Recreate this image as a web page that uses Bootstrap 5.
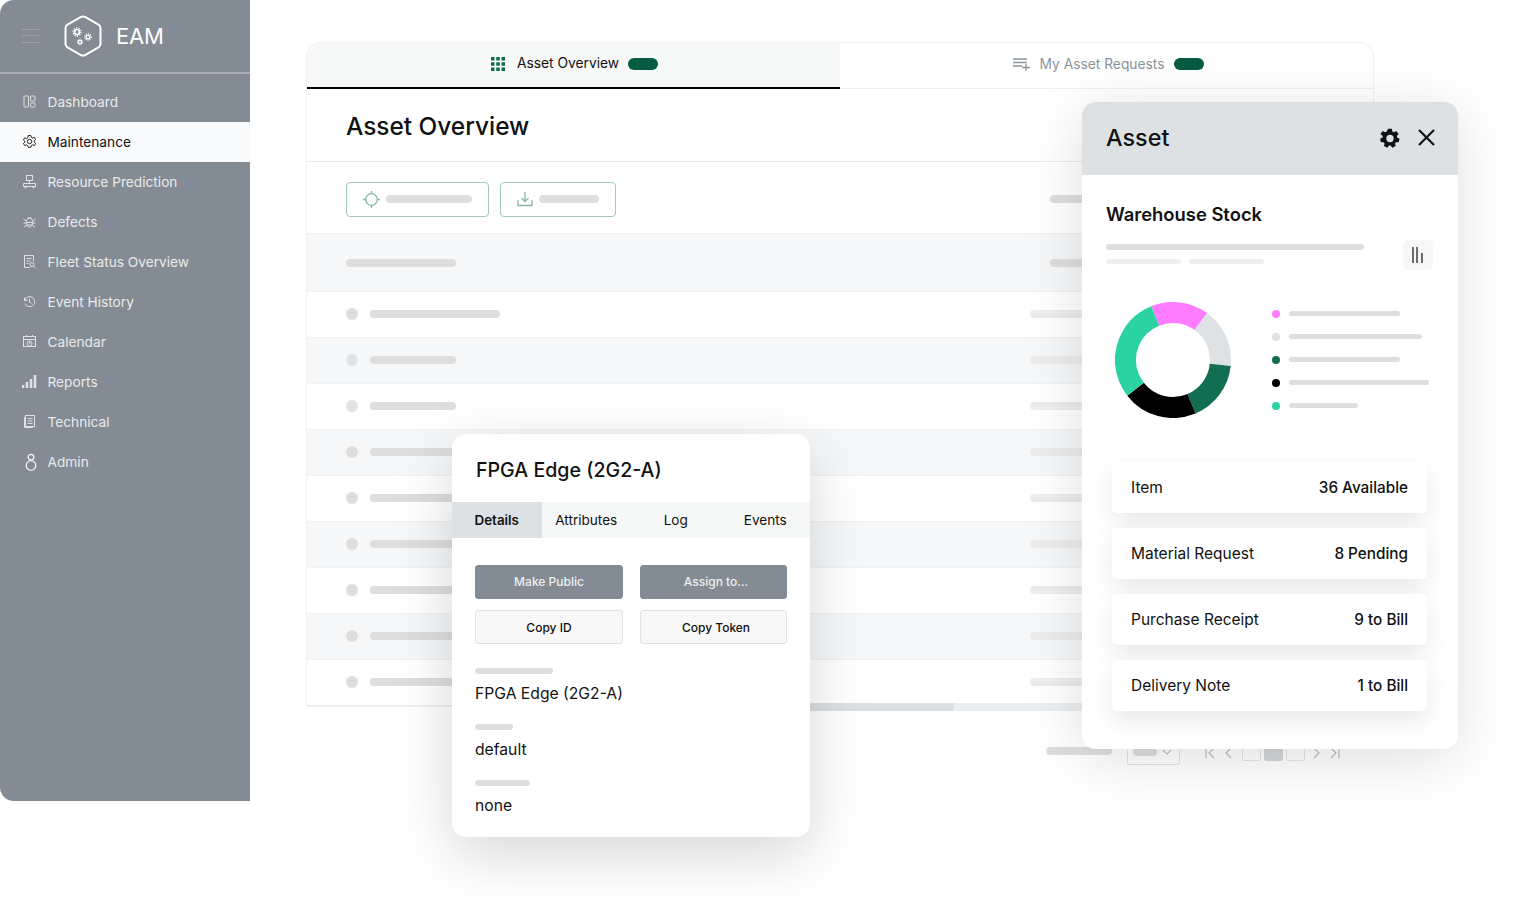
<!DOCTYPE html>
<html lang="en">
<head>
  <meta charset="UTF-8" />
  <meta name="viewport" content="width=device-width, initial-scale=1.0" />
  <title>EAM - Asset Overview</title>
  <link href="https://cdn.jsdelivr.net/npm/bootstrap@5.3.2/dist/css/bootstrap.min.css" rel="stylesheet" />
  <style>
    html, body {
      height: 100%;
    }

    body {
      background: #fff;
      color: #111;
      font-family: "Inter", "Liberation Sans", sans-serif;
      overflow: hidden;
    }

    .eam-canvas {
      position: relative;
      width: 1518px;
      height: 918px;
    }

    /* the four windows sit on a free canvas */
    .eam-side {
      position: absolute;
      left: 0;
      top: 0;
      width: 250px;
      height: 801px;
      background: #838c94;
      border-radius: 14px 0 0 14px;
    }

    .eam-brand {
      height: 74px;
      border-bottom: 2px solid #a9b0b5;
      padding-left: 22px;
    }

    .eam-burger {
      width: 17px;
      height: 14px;
      border-top: 1px solid #9aa2a8;
      border-bottom: 1px solid #9aa2a8;
      position: relative;
      margin-right: 25px;
    }

    .eam-burger::after {
      content: "";
      position: absolute;
      left: 0;
      right: 0;
      top: 5px;
      border-top: 1px solid #9aa2a8;
    }

    .eam-brand-name {
      font-size: 22px;
      color: #fff;
      margin-left: 14px;
      letter-spacing: -.2px;
    }

    .eam-nav {
      padding-top: 8px;
    }

    .eam-nav .nav-link {
      height: 40px;
      padding: 0 0 0 22px;
      display: flex;
      align-items: center;
      gap: 10.5px;
      font-size: 13.7px;
      color: #e9ebed;
    }

    .eam-nav .nav-link svg {
      width: 15px;
      height: 15px;
      flex: none;
      margin-top: -2px;
      fill: none;
      stroke: #dfe2e4;
      stroke-width: 1;
    }

    .eam-nav .nav-link svg.eam-ico-admin {
      height: 19px;
      margin-top: 0;
      stroke: #f1f2f3;
      stroke-width: 1.3;
    }

    .eam-nav .nav-link.active {
      background: #f9fafb;
      color: #111;
    }

    .eam-nav .nav-link.active svg {
      stroke: #222;
    }

    .eam-main {
      position: absolute;
      left: 306px;
      top: 42px;
      width: 1068px;
    }

    .eam-sheet {
      border: 1px solid #eef0f1;
      border-radius: 14px 14px 0 0;
      background: #fff;
      position: relative;
    }

    .eam-tab {
      height: 46px;
      flex: 1 1 50%;
      gap: 8px;
      padding: 0 0 3px 4px;
      font-size: 13.8px;
      color: #8b949b;
      border-bottom: 1px solid #eef0f1;
    }

    .eam-tab.is-on {
      background: #f7f8f8;
      color: #111;
      padding-left: 2px;
      border-bottom: 2px solid #000;
      border-top-left-radius: 14px;
    }

    .eam-pill {
      width: 30px;
      height: 12px;
      border-radius: 6px;
      background: #055c42;
      margin-left: 1px;
    }

    .eam-title {
      height: 73px;
      padding: 4px 0 0 39px;
      font-size: 24.4px;
      font-weight: 500;
      margin: 0;
      border-bottom: 1px solid #e9ebec;
    }

    .eam-tools {
      height: 72px;
      padding: 3px 0 0 39px;
      border-bottom: 1px solid #eef0f1;
      gap: 11px;
    }

    .eam-tool {
      height: 35px;
      border: 1px solid #a3c8bd;
      border-radius: 4px;
      padding: 0 16px;
      gap: 6px;
    }

    .eam-bar {
      display: block;
      height: 8px;
      border-radius: 4px;
      background: #dedede;
    }

    .eam-head {
      height: 58px;
      background: #f6f7f8;
      padding-left: 39px;
      border-bottom: 1px solid #eef0f1;
    }

    .eam-row {
      height: 46px;
      padding: 0 0 1px 39px;
      gap: 12px;
      border-bottom: 1px solid #f1f2f3;
    }

    .eam-row:nth-child(even) {
      background: #f6f7f8;
    }

    .eam-row:last-child {
      border-bottom-color: #e9ebec;
    }

    .eam-dot {
      width: 12px;
      height: 12px;
      border-radius: 50%;
      background: #dedede;
    }

    .eam-dot.is-blue {
      background: #dfe3e6;
    }

    /* right column of the table, mostly hidden behind the Asset window */
    .eam-tail {
      margin-left: auto;
      margin-right: 283px;
      width: 40px;
    }

    .eam-row .eam-tail {
      width: 60px;
      background: #ececec;
    }

    .eam-scroll {
      position: absolute;
      left: 145px;
      right: 0;
      bottom: -5px;
      height: 8px;
      background: #ebeef0;
    }

    .eam-scroll span {
      display: block;
      width: 502px;
      height: 8px;
      background: #dcdfe2;
    }

    .eam-pager {
      height: 76px;
      padding: 12px 33px 0 0;
      gap: 7px;
    }

    .eam-select {
      width: 53px;
      height: 26px;
      border: 1px solid #e2e4e6;
      border-radius: 2px;
      margin: 2px 17px 0 8px;
      padding-left: 5px;
      gap: 4px;
    }

    .eam-page {
      width: 19px;
      height: 20px;
      border: 1px solid #e2e4e6;
      border-radius: 2px;
    }

    .eam-page + .eam-page {
      margin-left: -4px;
    }

    .eam-page.is-last {
      margin-right: -2px;
    }

    .eam-page.is-on {
      background: #d2d6da;
      border-color: #d2d6da;
    }

    .eam-pager svg {
      fill: none;
      stroke: #b9bec2;
      stroke-width: 1.2;
      width: 12px;
      height: 12px;
      margin-top: 3px;
    }

    .eam-select svg {
      margin-top: 0;
    }

    .eam-popup {
      position: absolute;
      left: 452px;
      top: 434px;
      width: 358px;
      height: 403px;
      background: #fff;
      border-radius: 14px;
      box-shadow: 0 18px 60px rgba(0, 0, 0, .16);
    }

    .eam-popup h2 {
      font-size: 19.6px;
      font-weight: 500;
      margin: 0;
      padding: 25px 24px 0;
      height: 68px;
    }

    .eam-ptabs {
      height: 36px;
      background: #f6f7f7;
    }

    .eam-ptabs .nav-link {
      flex: 1 1 25%;
      padding: 0;
      height: 36px;
      display: flex;
      align-items: center;
      justify-content: center;
      font-size: 13.6px;
      color: #111;
    }

    .eam-ptabs .nav-link.active {
      background: #dee1e4;
      font-size: 13.4px;
      font-weight: 600;
    }

    .eam-actions {
      display: grid;
      grid-template-columns: 148px 147px;
      column-gap: 17px;
      row-gap: 11px;
      padding: 27px 0 0 23px;
    }

    .eam-actions .btn {
      height: 34px;
      font-size: 12px;
      font-weight: 500;
      padding: 0;
      border-radius: 3px;
    }

    .eam-actions .btn:nth-child(even) {
      padding-left: 5px;
    }

    .eam-actions .eam-btn-line {
      padding-top: 1px;
    }

    .eam-btn-fill {
      background: #838c94;
      border: 1px solid #838c94;
      color: #eef0f1;
    }

    .eam-btn-line {
      background: #f8f8f8;
      border: 1px solid #dfe2e4;
      color: #111;
    }

    .eam-fields {
      padding: 24px 0 0 23px;
      font-size: 15.7px;
    }

    .eam-field {
      height: 56px;
    }

    .eam-field .eam-bar {
      height: 6px;
      margin-bottom: 8px;
    }

    .eam-asset {
      position: absolute;
      left: 1082px;
      top: 102px;
      width: 376px;
      height: 647px;
      background: #fff;
      border-radius: 14px;
      box-shadow: 0 10px 60px rgba(0, 0, 0, .13);
      overflow: hidden;
    }

    .eam-asset-head {
      height: 73px;
      background: #dee1e4;
      padding: 0 20px 1px 24px;
      font-size: 23.4px;
      font-weight: 500;
    }

    .eam-asset-head svg {
      width: 24px;
      height: 24px;
    }

    .eam-asset-head svg.eam-gear {
      width: 22px;
      height: 22px;
      margin-right: 13px;
    }

    .eam-stock {
      padding: 28px 25px 0 24px;
    }

    .eam-stock h3 {
      font-size: 18.4px;
      font-weight: 600;
      margin: 0;
      height: 41px;
    }

    .eam-stock .eam-bar {
      height: 6px;
    }

    .eam-stock-bars {
      gap: 9px;
    }

    .eam-stock .eam-soft {
      background: #efefef;
      height: 5px;
    }

    .eam-ico-box {
      width: 30px;
      height: 30px;
      border-radius: 5px;
      background: #f6f7f8;
      margin-top: -4px;
    }

    .eam-chart {
      padding: 32px 0 0 9px;
    }

    .eam-legend {
      padding: 9px 0 0 41px;
      gap: 18px;
    }

    .eam-legend .eam-item {
      gap: 9px;
      height: 5px;
    }

    .eam-legend .eam-swatch {
      width: 8px;
      height: 8px;
      border-radius: 50%;
    }

    .eam-legend .eam-bar {
      height: 5px;
      border-radius: 3px;
    }

    .eam-list {
      padding: 44px 31px 0 30px;
      gap: 15px;
    }

    .eam-line {
      height: 51px;
      border-radius: 5px;
      background: #fff;
      padding: 0 19px;
      font-size: 15.5px;
      box-shadow: 0 10px 24px rgba(0, 0, 0, .09);
    }

    .eam-line b {
      padding-top: 2px;
      font-size: 15.3px;
      font-weight: 500;
    }
  </style>
</head>
<body>

  <div class="eam-canvas">

    <aside class="eam-side">
      <div class="eam-brand d-flex align-items-center">
        <div class="eam-burger"></div>
        <svg width="38" height="42" viewBox="0 0 38 42" fill="none" stroke="#fff" stroke-width="2">
          <path d="M16.5 2.2 3.5 9.6A4 4 0 0 0 1.5 13v16a4 4 0 0 0 2 3.4l13 7.4a5 5 0 0 0 5 0l13-7.4a4 4 0 0 0 2-3.4V13a4 4 0 0 0-2-3.4l-13-7.4a5 5 0 0 0-5 0Z" />
          <circle cx="13" cy="17" r="2.4" stroke-width="1.5" />
          <circle cx="13" cy="17" r="4" stroke-width="1.3" stroke-dasharray="1.3 1.2" />
          <circle cx="24" cy="22" r="1.9" stroke-width="1.3" />
          <circle cx="24" cy="22" r="3.2" stroke-width="1.1" stroke-dasharray="1.1 1" />
          <circle cx="16" cy="27" r="1.7" stroke-width="1.3" />
          <circle cx="16" cy="27" r="2.8" stroke-width="1" stroke-dasharray="1 .9" />
        </svg>
        <span class="eam-brand-name">EAM</span>
      </div>
      <nav class="nav flex-column eam-nav">
        <a class="nav-link" href="#">
          <svg viewBox="0 0 15 15"><rect x="2" y="2" width="4.5" height="11" rx=".8" /><rect x="8.5" y="2" width="4.5" height="5" rx=".8" /><rect x="8.5" y="9" width="4.5" height="4" rx=".8" /></svg>
          Dashboard
        </a>
        <a class="nav-link active" href="#">
          <svg viewBox="0 0 15 15"><circle cx="7.5" cy="7.5" r="2.2" /><path d="M6.2 1.5h2.6l.4 1.8 1.4.7 1.7-.7 1.3 2.2-1.4 1.2v1.5l1.4 1.2-1.3 2.2-1.7-.7-1.4.7-.4 1.8H6.2l-.4-1.8-1.4-.7-1.7.7-1.3-2.2 1.4-1.2V7.2L1.4 6l1.3-2.2 1.7.7 1.4-.7Z" /></svg>
          Maintenance
        </a>
        <a class="nav-link" href="#">
          <svg viewBox="0 0 15 15"><rect x="4.5" y="1.5" width="6" height="5" /><path d="M7.5 6.5v3M1.5 12.5v-3h12v3ZM1.5 12.5h12" /><circle cx="3.5" cy="13.2" r=".8" /><circle cx="11.5" cy="13.2" r=".8" /></svg>
          Resource Prediction
        </a>
        <a class="nav-link" href="#">
          <svg viewBox="0 0 15 15"><ellipse cx="7.5" cy="8.5" rx="3" ry="4.5" /><path d="M5.5 3 7.5 5l2-2M1.5 5l3 2M13.5 5l-3 2M1.5 9h3M13.5 9h-3M2 13l3-2M13 13l-3-2M5 8.5h5M5 11h5" /></svg>
          Defects
        </a>
        <a class="nav-link" href="#">
          <svg viewBox="0 0 15 15"><path d="M11.5 7V1.5h-9v12h5" /><path d="M4.5 4.5h5M4.5 7h4M4.5 9.5h2" /><circle cx="10" cy="10.5" r="2" /><path d="m11.5 12 2 2" /></svg>
          Fleet Status Overview
        </a>
        <a class="nav-link" href="#">
          <svg viewBox="0 0 15 15"><path d="M2.5 3.5v3h3" /><path d="M2.8 6.5A5 5 0 1 1 3 9.5" /><path d="M7.5 5v3l2 1.2" /></svg>
          Event History
        </a>
        <a class="nav-link" href="#">
          <svg viewBox="0 0 15 15"><rect x="1.5" y="2.5" width="12" height="10" /><path d="M1.5 5.5h12M4.5 1v2M10.5 1v2" /><circle cx="7.5" cy="9.5" r="2.5" /><path d="M7.5 8.2v1.3h1" /></svg>
          Calendar
        </a>
        <a class="nav-link" href="#">
          <svg viewBox="0 0 15 15"><path d="M1 11v3M5 8v6M9 5v9M13 1v13" stroke-width="2.6" /></svg>
          Reports
        </a>
        <a class="nav-link" href="#">
          <svg viewBox="0 0 15 15"><rect x="3.5" y="1.5" width="9" height="11" /><path d="M3.5 3.5h-1v10h8v-1M5.5 4.5h5M5.500 7h5M5.5 9.500h5" /></svg>
          Technical
        </a>
        <a class="nav-link" href="#">
          <svg class="eam-ico-admin" viewBox="-1.5 0 15 19"><circle cx="7.5" cy="4.2" r="2.8" /><circle cx="7.5" cy="12.5" r="4.8" /></svg>
          Admin
        </a>
      </nav>
    </aside>

    <section class="eam-main">
      <div class="eam-sheet">
        <div class="d-flex">
          <div class="eam-tab is-on d-flex align-items-center justify-content-center">
            <svg width="14" height="14" viewBox="0 0 14 14" fill="#0f6a4e">
              <rect width="3.5" height="3.5" /><rect x="5.25" width="3.5" height="3.5" /><rect x="10.5" width="3.5" height="3.5" />
              <rect y="5.25" width="3.5" height="3.5" /><rect x="5.25" y="5.25" width="3.5" height="3.5" /><rect x="10.5" y="5.25" width="3.5" height="3.5" />
              <rect y="10.5" width="3.5" height="3.5" /><rect x="5.25" y="10.5" width="3.5" height="3.5" /><rect x="10.5" y="10.5" width="3.5" height="3.5" />
            </svg>
            <span class="ms-1">Asset Overview</span>
            <span class="eam-pill"></span>
          </div>
          <div class="eam-tab d-flex align-items-center justify-content-center">
            <svg width="18" height="13" viewBox="0 0 18 13" fill="none" stroke="#8b949b" stroke-width="1.3">
              <path d="M0 1h14M0 4.5h14M0 8h9M13 6v7M9 9.5h8" />
            </svg>
            <span>My Asset Requests</span>
            <span class="eam-pill"></span>
          </div>
        </div>

        <h1 class="eam-title d-flex align-items-center">Asset Overview</h1>

        <div class="eam-tools d-flex align-items-center">
          <div class="eam-tool d-flex align-items-center">
            <svg width="17" height="17" viewBox="0 0 17 17" fill="none" stroke="#86b5a7" stroke-width="1.3"><circle cx="8.5" cy="8.5" r="5.8" /><path d="M8.5 0v2M8.5 15v2M0 8.5h2M15 8.5h2" /></svg>
            <span class="eam-bar" style="width:86px"></span>
          </div>
          <div class="eam-tool d-flex align-items-center">
            <svg width="16" height="16" viewBox="0 0 16 16" fill="none" stroke="#86b5a7" stroke-width="1.3"><path d="M1 9v5.5h14V9M8 1v9M4.5 7 8 10.500 11.500 7" /></svg>
            <span class="eam-bar" style="width:60px"></span>
          </div>
          <span class="eam-bar eam-tail"></span>
        </div>

        <div class="eam-head d-flex align-items-center">
          <span class="eam-bar" style="width:110px"></span>
          <span class="eam-bar eam-tail"></span>
        </div>

        <div>
          <div class="eam-row d-flex align-items-center"><span class="eam-dot"></span><span class="eam-bar" style="width:130px"></span><span class="eam-bar eam-tail"></span></div>
          <div class="eam-row d-flex align-items-center"><span class="eam-dot is-blue"></span><span class="eam-bar" style="width:86px"></span><span class="eam-bar eam-tail"></span></div>
          <div class="eam-row d-flex align-items-center"><span class="eam-dot is-blue"></span><span class="eam-bar" style="width:86px"></span><span class="eam-bar eam-tail"></span></div>
          <div class="eam-row d-flex align-items-center"><span class="eam-dot"></span><span class="eam-bar" style="width:86px"></span><span class="eam-bar eam-tail"></span></div>
          <div class="eam-row d-flex align-items-center"><span class="eam-dot"></span><span class="eam-bar" style="width:86px"></span><span class="eam-bar eam-tail"></span></div>
          <div class="eam-row d-flex align-items-center"><span class="eam-dot"></span><span class="eam-bar" style="width:86px"></span><span class="eam-bar eam-tail"></span></div>
          <div class="eam-row d-flex align-items-center"><span class="eam-dot"></span><span class="eam-bar" style="width:86px"></span><span class="eam-bar eam-tail"></span></div>
          <div class="eam-row d-flex align-items-center"><span class="eam-dot"></span><span class="eam-bar" style="width:86px"></span><span class="eam-bar eam-tail"></span></div>
          <div class="eam-row d-flex align-items-center"><span class="eam-dot"></span><span class="eam-bar" style="width:86px"></span><span class="eam-bar eam-tail"></span></div>
        </div>

        <div class="eam-scroll"><span></span></div>
      </div>

      <div class="eam-pager d-flex align-items-center justify-content-end">
        <span class="eam-bar" style="width:66px"></span>
        <div class="eam-select d-flex align-items-center">
          <span class="eam-bar" style="width:24px"></span>
          <svg viewBox="0 0 12 12"><path d="m2 4 4 4 4-4" /></svg>
        </div>
        <svg viewBox="0 0 12 12"><path d="M2 1v10M10 1 5 6l5 5" /></svg>
        <svg viewBox="0 0 12 12"><path d="M8 1 3 6l5 5" /></svg>
        <span class="eam-page"></span>
        <span class="eam-page is-on"></span>
        <span class="eam-page is-last"></span>
        <svg viewBox="0 0 12 12"><path d="m4 1 5 5-5 5" /></svg>
        <svg viewBox="0 0 12 12"><path d="M10 1v10M2 1l5 5-5 5" /></svg>
      </div>
    </section>

    <section class="eam-popup">
      <h2>FPGA Edge (2G2-A)</h2>
      <nav class="nav eam-ptabs">
        <a class="nav-link active" href="#">Details</a>
        <a class="nav-link" href="#">Attributes</a>
        <a class="nav-link" href="#">Log</a>
        <a class="nav-link" href="#">Events</a>
      </nav>
      <div class="eam-actions">
        <button type="button" class="btn eam-btn-fill">Make Public</button>
        <button type="button" class="btn eam-btn-fill">Assign to...</button>
        <button type="button" class="btn eam-btn-line">Copy ID</button>
        <button type="button" class="btn eam-btn-line">Copy Token</button>
      </div>
      <div class="eam-fields">
        <div class="eam-field"><span class="eam-bar" style="width:78px"></span>FPGA Edge (2G2-A)</div>
        <div class="eam-field"><span class="eam-bar" style="width:38px"></span>default</div>
        <div class="eam-field"><span class="eam-bar" style="width:55px"></span>none</div>
      </div>
    </section>

    <section class="eam-asset">
      <div class="eam-asset-head d-flex align-items-center">
        <span class="me-auto">Asset</span>
        <svg class="eam-gear" viewBox="0 0 24 24" fill="#111"><path fill-rule="evenodd" d="M10 2h4l.6 2.9 1.7.8 2.600-1.400 2.500 3.200-1.900 2.200.3 1.800 2.600 1.200-.9 4-2.900-.1-1.100 1.400.7 2.800-3.700 1.800-1.800-2.300h-1.800l-1.800 2.300-3.700-1.800.7-2.800-1.100-1.400-2.900.1-.9-4 2.600-1.200.3-1.800L1.600 7.500l2.500-3.200 2.600 1.400 1.700-.8Zm2 6.500a4 4 0 1 0 0 8 4 4 0 0 0 0-8Z" /></svg>
        <svg viewBox="0 0 24 24" fill="none" stroke="#111" stroke-width="2.2"><path d="m5 4 15 15M20 4 5 19" /></svg>
      </div>

      <div class="eam-stock">
        <h3>Warehouse Stock</h3>
        <div class="d-flex">
          <div class="eam-stock-bars d-flex flex-column flex-grow-1">
            <span class="eam-bar" style="width:258px"></span>
            <div class="d-flex gap-2">
              <span class="eam-bar eam-soft" style="width:75px"></span>
              <span class="eam-bar eam-soft" style="width:75px"></span>
            </div>
          </div>
          <div class="eam-ico-box d-flex align-items-center justify-content-center">
            <svg width="14" height="16" viewBox="0 0 14 16" fill="none" stroke="#222" stroke-width="1.3"><path d="M2 0v16M6 0v16M11 6v10" /></svg>
          </div>
        </div>

        <div class="eam-chart d-flex">
          <svg width="116" height="116" viewBox="0 0 116 116" fill="none" stroke-width="21">
            <g transform="rotate(-112 58 58)">
              <circle cx="58" cy="58" r="47.5" pathLength="360" stroke="#ff7bff" stroke-dasharray="58 360" />
              <circle cx="58" cy="58" r="47.5" pathLength="360" stroke="#dfe2e4" stroke-dasharray="60 360" stroke-dashoffset="-58" />
              <circle cx="58" cy="58" r="47.5" pathLength="360" stroke="#126e52" stroke-dasharray="61 360" stroke-dashoffset="-118" />
              <circle cx="58" cy="58" r="47.5" pathLength="360" stroke="#000" stroke-dasharray="75 360" stroke-dashoffset="-179" />
              <circle cx="58" cy="58" r="47.5" pathLength="360" stroke="#2bd3a3" stroke-dasharray="106 360" stroke-dashoffset="-254" />
            </g>
          </svg>
          <div class="eam-legend d-flex flex-column">
            <div class="eam-item d-flex align-items-center"><span class="eam-swatch" style="background:#ff7bff"></span><span class="eam-bar" style="width:111px"></span></div>
            <div class="eam-item d-flex align-items-center"><span class="eam-swatch" style="background:#dfe2e4"></span><span class="eam-bar" style="width:133px"></span></div>
            <div class="eam-item d-flex align-items-center"><span class="eam-swatch" style="background:#126e52"></span><span class="eam-bar" style="width:111px"></span></div>
            <div class="eam-item d-flex align-items-center"><span class="eam-swatch" style="background:#000"></span><span class="eam-bar" style="width:140px"></span></div>
            <div class="eam-item d-flex align-items-center"><span class="eam-swatch" style="background:#2bd3a3"></span><span class="eam-bar" style="width:69px"></span></div>
          </div>
        </div>
      </div>

      <div class="eam-list d-flex flex-column">
        <div class="eam-line d-flex align-items-center justify-content-between"><span>Item</span><b>36 Available</b></div>
        <div class="eam-line d-flex align-items-center justify-content-between"><span>Material Request</span><b>8 Pending</b></div>
        <div class="eam-line d-flex align-items-center justify-content-between"><span>Purchase Receipt</span><b>9 to Bill</b></div>
        <div class="eam-line d-flex align-items-center justify-content-between"><span>Delivery Note</span><b>1 to Bill</b></div>
      </div>
    </section>

  </div>

  <script src="https://cdn.jsdelivr.net/npm/bootstrap@5.3.2/dist/js/bootstrap.bundle.min.js"></script>
</body>
</html>
